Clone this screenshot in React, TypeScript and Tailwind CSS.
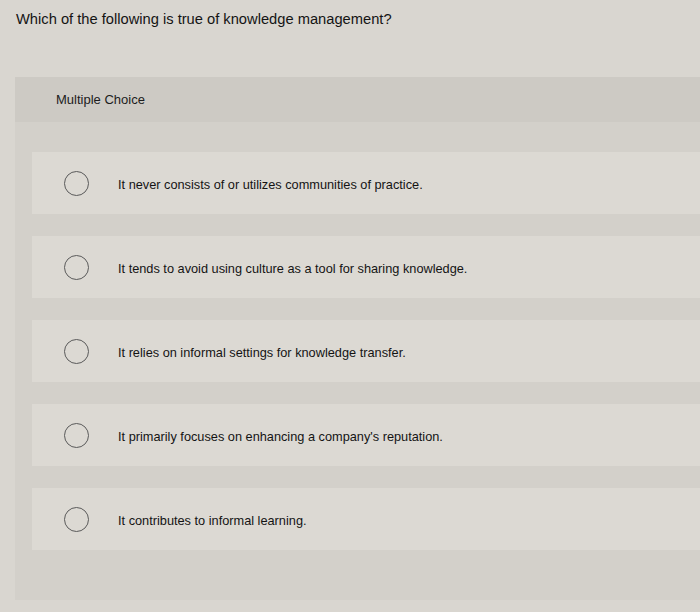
import React from "react";

const OPTIONS = [
  "It never consists of or utilizes communities of practice.",
  "It tends to avoid using culture as a tool for sharing knowledge.",
  "It relies on informal settings for knowledge transfer.",
  "It primarily focuses on enhancing a company's reputation.",
  "It contributes to informal learning.",
];

export default function App() {
  return (
    <div
      className="h-[612px] w-[700px] overflow-hidden bg-[#d9d6d0] text-[#222]"
      style={{ fontFamily: '"Liberation Sans", Arial, sans-serif' }}
    >
      <h1 className="pl-4 pt-[10px] text-[14.7px] leading-[18px] text-[#141414]">
        Which of the following is true of knowledge management?
      </h1>

      <div className="ml-[15px] mt-[49px] flex h-[523px] flex-col bg-[#d3d0ca]">
        <div className="flex h-[45px] items-center bg-[#cdcac4] pl-[41px] text-[13px] text-[#1c1c1c]">
          Multiple Choice
        </div>
        <div className="flex flex-col gap-[22px] pt-[30px]">
          {OPTIONS.map((o) => (
            <div key={o} className="ml-[17px] flex h-[62px] items-center bg-[#dcd9d3]">
              <span className="ml-[32px] h-[25px] w-[25px] shrink-0 rounded-full border-[1.5px] border-[#5a5a5a]" />
              <span className="ml-[29px] pt-[3px] text-[12.75px] text-[#141414]">{o}</span>
            </div>
          ))}
        </div>
      </div>
    </div>
  );
}
